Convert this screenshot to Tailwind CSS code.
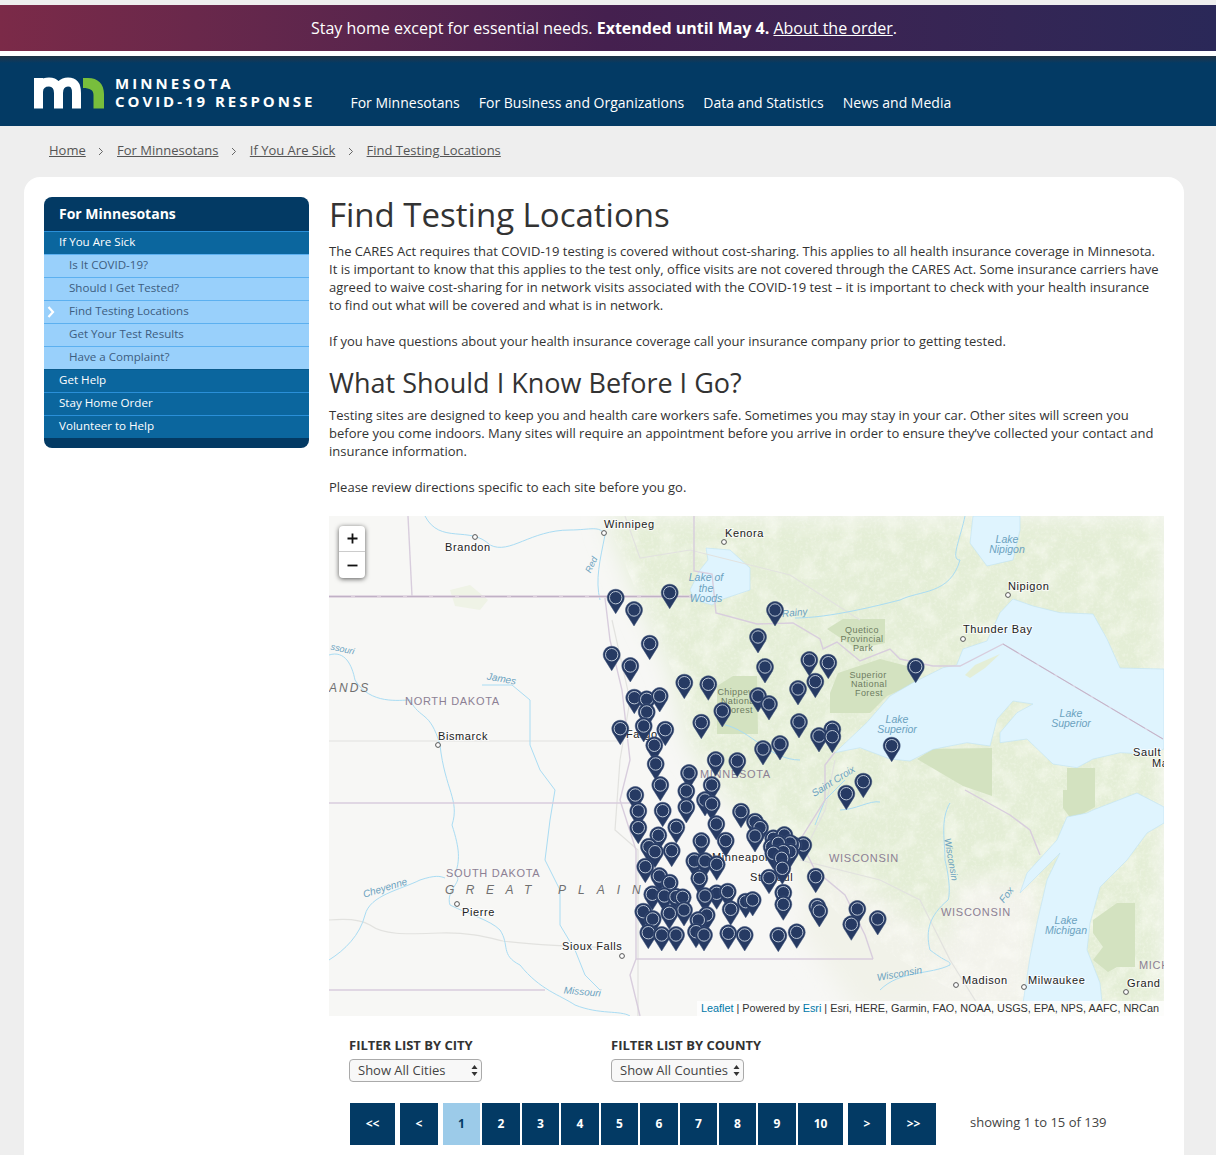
<!DOCTYPE html>
<html lang="en">

<head>
    <meta charset="UTF-8">
    <title>Find Testing Locations - Minnesota COVID-19 Response</title>
    <script src="https://cdn.jsdelivr.net/npm/@tailwindcss/browser@4"></script>
</head>

<body class="bg-[#eeeeee] h-[1155px] overflow-hidden font-['Open_Sans',sans-serif] text-[#333333]">
    <!-- alert banner -->
    <div class="pt-[5px] bg-[#eeeeee]">
        <div class="h-[46px] pr-[8px] flex items-center justify-center text-white text-[16px] bg-gradient-to-r from-[#7b2a48] via-[#45204f] to-[#2a2858]">
            <p>Stay home except for essential needs. <b class="font-bold">Extended until May 4.</b> <a class="underline" href="#">About the order</a>.</p>
        </div>
    </div>
    <div class="h-[5px] bg-white"></div>

    <!-- header -->
    <header class="h-[70px] bg-[#033a64] flex px-[34px] bg-gradient-to-b from-[#1d3344] via-[#033a64] via-[10%] to-[#033a64]">
        <svg class="w-[72px] h-[34px] mt-[20px] shrink-0" viewBox="34 76 72 34" fill="none">
            <path d="M38.5 108.5V78M38.5 92C38.5 84 44 82 49 82C55 82 58.5 86 58.5 93V108.5M58.5 93C58.5 85 63 82 68 82C74 82 76.5 86 76.5 93V108.5" stroke="#ffffff" stroke-width="9" />
            <path d="M83 78H88C98 78 104 84 104 94V108.5H93.5V95C93.5 90 90 88 83 88Z" fill="#78be3c" />
        </svg>
        <div class="ml-[9px] mt-[18px] text-white font-bold text-[15px] leading-[18px] whitespace-nowrap">
            <div class="tracking-[3.05px]">MINNESOTA</div>
            <div class="tracking-[2.97px]">COVID-19 RESPONSE</div>
        </div>
        <nav class="ml-[35px] mt-[37px] flex gap-[19px] text-white text-[14px] font-medium h-[20px] leading-[20px] whitespace-nowrap">
            <a href="#">For Minnesotans</a>
            <a href="#">For Business and Organizations</a>
            <a href="#">Data and Statistics</a>
            <a href="#">News and Media</a>
        </nav>
    </header>

    <!-- breadcrumb -->
    <div class="h-[51px] pl-[49px] flex items-center text-[13px] text-[#555555] pb-[1px]">
        <a class="underline" href="#">Home</a>
        <svg class="w-[6px] h-[9px] mx-[12.65px]" viewBox="0 0 6 9" fill="none"><path d="M1 1l3.5 3.5L1 8" stroke="#666666" /></svg>
        <a class="underline" href="#">For Minnesotans</a>
        <svg class="w-[6px] h-[9px] mx-[12.65px]" viewBox="0 0 6 9" fill="none"><path d="M1 1l3.5 3.5L1 8" stroke="#666666" /></svg>
        <a class="underline" href="#">If You Are Sick</a>
        <svg class="w-[6px] h-[9px] mx-[12.65px]" viewBox="0 0 6 9" fill="none"><path d="M1 1l3.5 3.5L1 8" stroke="#666666" /></svg>
        <a class="underline" href="#">Find Testing Locations</a>
    </div>

    <!-- main card -->
    <div class="mx-[24px] w-[1160px] bg-white rounded-t-[16px] pt-[20px] px-[20px] pb-[40px] flex gap-[20px]">
        <!-- side nav -->
        <aside class="w-[265px] shrink-0 self-start rounded-[8px] overflow-hidden bg-[#033a64] pb-[10px] text-[11.6px]">
            <h2 class="h-[34px] pl-[15px] pb-[2px] flex items-center text-white font-bold text-[14px]">For Minnesotans</h2>
            <a class="h-[23px] pl-[15px] pb-[2px] flex items-center bg-[#0b669e] text-white border-t border-[#2a8fd8]" href="#">If You Are Sick</a>
            <a class="h-[23px] pl-[25px] pb-[2px] flex items-center bg-[#99d0fb] text-[#3d5d80] border-t border-[#5cb0f0]" href="#">Is It COVID-19?</a>
            <a class="h-[23px] pl-[25px] pb-[2px] flex items-center bg-[#99d0fb] text-[#3d5d80] border-t border-[#5cb0f0]" href="#">Should I Get Tested?</a>
            <a class="relative h-[23px] pl-[25px] pb-[2px] flex items-center bg-[#99d0fb] text-[#3d5d80] border-t border-[#5cb0f0]" href="#">
                <svg class="absolute left-[3px] top-[5px] w-[8px] h-[12px]" viewBox="0 0 8 12" fill="none"><path d="M1.5 1l4.5 5-4.5 5" stroke="#ffffff" stroke-width="2.2" /></svg>
                Find Testing Locations
            </a>
            <a class="h-[23px] pl-[25px] pb-[2px] flex items-center bg-[#99d0fb] text-[#3d5d80] border-t border-[#5cb0f0]" href="#">Get Your Test Results</a>
            <a class="h-[23px] pl-[25px] pb-[2px] flex items-center bg-[#99d0fb] text-[#3d5d80] border-t border-[#5cb0f0]" href="#">Have a Complaint?</a>
            <a class="h-[23px] pl-[15px] pb-[2px] flex items-center bg-[#0b669e] text-white border-t border-[#0a5a8c]" href="#">Get Help</a>
            <a class="h-[23px] pl-[15px] pb-[2px] flex items-center bg-[#0b669e] text-white border-t border-[#2a8fd8]" href="#">Stay Home Order</a>
            <a class="h-[23px] pl-[15px] pb-[2px] flex items-center bg-[#0b669e] text-white border-t border-[#2a8fd8]" href="#">Volunteer to Help</a>
        </aside>

        <!-- content -->
        <main class="w-[835px] shrink-0">
            <h1 class="-mt-[1px] text-[33px] leading-[37px] text-[#333333]">Find Testing Locations</h1>
            <p class="mt-[9px] text-[13px] leading-[18px]">The CARES Act requires that COVID-19 testing is covered without cost-sharing. This applies to all health insurance coverage in Minnesota. It is important to know that this applies to the test only, office visits are not covered through the CARES Act. Some insurance carriers have agreed to waive cost-sharing for in network visits associated with the COVID-19 test – it is important to check with your health insurance to find out what will be covered and what is in network.</p>
            <p class="mt-[18px] text-[13px] leading-[18px]">If you have questions about your health insurance coverage call your insurance company prior to getting tested.</p>
            <h2 class="mt-[15px] text-[27px] leading-[35px]">What Should I Know Before I Go?</h2>
            <p class="mt-[6px] text-[13px] leading-[18px]">Testing sites are designed to keep you and health care workers safe. Sometimes you may stay in your car. Other sites will screen you before you come indoors. Many sites will require an appointment before you arrive in order to ensure they’ve collected your contact and insurance information.</p>
            <p class="mt-[18px] text-[13px] leading-[18px]">Please review directions specific to each site before you go.</p>

            <!-- map -->
            <div class="relative mt-[20px] w-[835px] h-[500px] overflow-hidden">
                <svg id="map" class="block w-[835px] h-[500px]" viewBox="329 516 835 500" fill="none">
                    <defs>
                        <filter id="speckle" x="0" y="0" width="100%" height="100%">
                            <feTurbulence type="fractalNoise" baseFrequency="0.35" numOctaves="2" seed="4" />
                            <feColorMatrix values="0 0 0 0 1  0 0 0 0 1  0 0 0 0 0.95  1.6 0 0 0 -0.72" />
                        </filter>
                        <filter id="patches" x="0" y="0" width="100%" height="100%">
                            <feTurbulence type="fractalNoise" baseFrequency="0.05" numOctaves="3" seed="9" />
                            <feColorMatrix values="0 0 0 0 1  0 0 0 0 1  0 0 0 0 0.96  2.2 0 0 0 -0.95" />
                        </filter>
                        <filter id="soft"><feGaussianBlur stdDeviation="12" /></filter>
                        <clipPath id="greenclip"><path d="M605 516L640 600L672 670L690 745L725 795L785 845L815 890L860 935L925 975L1000 1016H1164V516Z" /></clipPath>
                        <g id="pin">
                            <path d="M0 16L-7.4 4.2A8.5 8.5 0 1 1 7.4 4.2Z" fill="#263a63" stroke="#3d5078" stroke-width=".5" />
                            <circle r="6.2" fill="#263a63" stroke="#bcc7d6" stroke-width="1" />
                        </g>
                    </defs>

                    <!-- land -->
                    <rect x="329" y="516" width="835" height="500" fill="#f7f7f5" />
                    <path d="M605 516L640 600L672 670L690 745L725 795L785 845L815 890L860 935L925 975L1000 1016H1164V516Z" fill="#e4eed6" filter="url(#soft)" />
                    <path d="M820 850L930 930L1030 1016H860L800 930Z" fill="#f1f2e9" filter="url(#soft)" />
                    <path d="M960 880L1040 880L1040 1016L920 1016Z" fill="#f3f3ec" filter="url(#soft)" />
                    <rect x="329" y="516" width="835" height="500" filter="url(#patches)" clip-path="url(#greenclip)" opacity=".5" />
                    <rect x="329" y="516" width="835" height="500" filter="url(#speckle)" clip-path="url(#greenclip)" opacity=".45" />

                    <!-- parks -->
                    <g fill="#d3e2c0">
                        <path d="M827 629L843 619H885V643L857 649Z" />
                        <path d="M838 673L880 659L907 666L917 683L887 696L870 713H830V693Z" />
                        <path d="M717 686L733 676H757L758 734H717Z" />
                        <path d="M917 759L933 749L992 748V796L963 786Z" />
                        <path d="M1067 768H1095V806H1067Z" />
                        <path d="M1093 920L1117 903H1135V967H1117L1108 972L1093 960L1103 947L1093 933Z" />
                        <path d="M1063 790H1095V807L1072 820L1063 808Z" />
                        <path d="M450 590L470 585L488 600L480 610L455 606Z" fill="#eff3e6" />
                    </g>

                    <!-- water -->
                    <g fill="#dff4fe" stroke="#bfe3f3" stroke-width=".6">
                        <path d="M835 752.7L866.7 722.7L890 696L913 682.7L943 667.7L956.7 665L963 649L987 641L1000 612.7L1013 599L1033 606L1060 612.7L1093 614L1107 639L1120 668L1164 669V749L1147 754L1120 752.7L1093 759L1077 767.7L1053 764L1027 739L1000 742.7V732.7L1017 712.7L1033 704L1013 701L997 719L990 746L967 742.7L933 749.3L910 761L890 759L860 747.7Z" />
                        <path d="M973 516H1020V530L1013 560L987 566L970 543Z" />
                        <path d="M1093 810L1137 793L1164 807V823L1147 833L1127 860L1100 887L1090 923L1087 950L1100 983L1102 1003H1023L1030 957L1037 923L1047 880L1060 853L1040 873L1020 893L1027 873L1057 840L1067 817L1087 813Z" />
                        <path d="M706 548L730 550L750 568L750 590L720 600L712 605L695 600L690 590L700 570L708 560Z" />
                    </g>
                    <!-- isle royale -->
                    <path d="M965 675L975 665L1000 654L985 668L970 678Z" fill="#e4eed6" />

                    <!-- roads -->
                    <g stroke="#e2e2df" stroke-width="1.2">
                        <path d="M329 741H620" />
                        <path d="M329 920C350 918 362 920 370 925C385 936 410 934 440 933C470 932 490 938 503 941C540 946 580 947 620 948" />
                        <path d="M625 516L640 558L690 550L790 575L860 620" />
                        <path d="M612 620L630 700L620 760L615 830L638 850V1016" />
                        <path d="M835 760L825 810L800 860L880 880L920 900L950 960L985 1016" />
                    </g>

                    <!-- rivers -->
                    <g stroke="#a9dcf3" stroke-width="1">
                        <path d="M425 516C440 545 470 525 490 545C510 555 530 530 570 530C590 530 600 525 605 535C600 560 595 580 600 600" />
                        <path d="M329 655C345 650 352 665 355 680C370 705 400 700 410 700C420 720 430 710 440 745C445 790 460 800 452 825C460 850 460 860 455 875C465 880 445 890 450 905C470 915 490 920 500 930C510 945 500 955 520 965C540 990 560 995 575 1005C600 1015 620 1010 630 1016" />
                        <path d="M482 685L512 685L530 700L530 745L540 770L555 790L550 820L545 860L560 890L560 925L575 950L585 975L600 990" />
                        <path d="M329 960C345 950 360 935 365 915C370 895 400 890 420 880C435 875 440 876 445 878" />
                        <path d="M880 802C870 800 855 810 840 810M845 780L825 800L815 825" />
                        <path d="M950 803C940 820 945 840 945 860C950 880 950 895 948 900C930 915 925 930 930 950C950 965 950 960 950 965C930 975 900 970 880 990" />
                        <path d="M795 618C830 618 880 605 900 600C920 590 950 595 960 560C950 560 960 540 965 516" />
                        <path d="M725 725C750 730 770 760 800 760" />
                    </g>

                    <!-- borders -->
                    <g stroke="#d8cddd" stroke-width="1.4">
                        <path d="M329 596.5H693" stroke-width="2.4" stroke="#dccfdd" />
                        <path d="M329 596.5H693" stroke="#b9a9c0" stroke-width=".8" stroke-dasharray="22 4" />
                        <path d="M694 516V571L712 574L716 613L757 624L793 623L820 639L823 649L837 642L860 661L890 649L900 659L933 666L960 666L1003 644L1163 739" />
                        <path d="M1003 644L1163 739" stroke="#b9a9c0" stroke-width=".7" stroke-dasharray="18 3" />
                        <path d="M408 516L412 596" />
                        <path d="M329 803H630" />
                        <path d="M329 990H545" />
                        <path d="M636 959H873" />
                        <path d="M605 598L610 640L622 690L630 760L620 800L636 850V959" />
                        <path d="M636 959L630 975L640 1016" />
                        <path d="M835 752L825 765V800L800 840L815 870L845 895L865 935L873 959" />
                        <path d="M965 790L1010 815L1030 830L1040 855" />
                    </g>

                    <!-- city dots -->
                    <g fill="#ffffff" stroke="#555555" stroke-width="1">
                        <circle cx="604" cy="533" r="2.4" /><circle cx="475" cy="537" r="2.4" /><circle cx="724" cy="542" r="2.4" />
                        <circle cx="1008" cy="595" r="2.4" /><circle cx="963" cy="639" r="2.4" /><circle cx="438" cy="745" r="2.4" />
                        <circle cx="457" cy="904" r="2.4" /><circle cx="622" cy="956" r="2.4" /><circle cx="956" cy="985" r="2.4" />
                        <circle cx="1024" cy="987" r="2.4" /><circle cx="1126" cy="992" r="2.4" />
                    </g>

                    <!-- labels -->
                    <g font-family="'Liberation Sans',Arial,sans-serif" font-size="11" letter-spacing=".6" fill="#222222" stroke="#ffffff" stroke-width="2" stroke-opacity=".7" paint-order="stroke">
                        <text x="604" y="528">Winnipeg</text>
                        <text x="445" y="551">Brandon</text>
                        <text x="725" y="537">Kenora</text>
                        <text x="1008" y="590">Nipigon</text>
                        <text x="963" y="633">Thunder Bay</text>
                        <text x="438" y="740">Bismarck</text>
                        <text x="462" y="916">Pierre</text>
                        <text x="562" y="950">Sioux Falls</text>
                        <text x="962" y="984">Madison</text>
                        <text x="1028" y="984">Milwaukee</text>
                        <text x="1127" y="987">Grand</text>
                        <text x="1133" y="756">Sault</text>
                        <text x="1152" y="767">Ma</text>
                        <text x="626" y="738">Fargo</text>
                        <text x="712" y="861">Minneapolis</text>
                        <text x="750" y="881">St. Paul</text>
                    </g>
                    <g font-family="'Liberation Sans',Arial,sans-serif" font-size="11" letter-spacing=".7" fill="#8c8094">
                        <text x="405" y="705">NORTH DAKOTA</text>
                        <text x="446" y="877">SOUTH DAKOTA</text>
                        <text x="700" y="778">MINNESOTA</text>
                        <text x="829" y="862">WISCONSIN</text>
                        <text x="941" y="916">WISCONSIN</text>
                        <text x="1139" y="969">MICH</text>
                    </g>
                    <g font-family="'Liberation Sans',Arial,sans-serif" font-size="12" font-style="italic" fill="#6f6f6f">
                        <text x="329" y="692" letter-spacing="2">ANDS</text>
                        <text x="445" y="894" letter-spacing="11.5">GREAT</text>
                        <text x="558" y="894" letter-spacing="12">PLAIN</text>
                    </g>
                    <g font-family="'Liberation Sans',Arial,sans-serif" font-size="10.5" font-style="italic" fill="#6ba2bf" text-anchor="middle">
                        <text x="706" y="581">Lake of</text><text x="706" y="592">the</text><text x="706" y="602">Woods</text>
                        <text x="1007" y="543">Lake</text><text x="1007" y="553">Nipigon</text>
                        <text x="897" y="723">Lake</text><text x="897" y="733">Superior</text>
                        <text x="1071" y="717">Lake</text><text x="1071" y="727">Superior</text>
                        <text x="1066" y="924">Lake</text><text x="1066" y="934">Michigan</text>
                        <text transform="translate(795 616) rotate(-6)" font-size="10">Rainy</text>
                        <text transform="translate(501 682) rotate(10)" font-size="10">James</text>
                        <text transform="translate(342 652) rotate(12)" font-size="9">ssouri</text>
                        <text transform="translate(594 566) rotate(-65)" font-size="9">Red</text>
                        <text transform="translate(835 784) rotate(-32)" font-size="10">Saint Croix</text>
                        <text transform="translate(386 891) rotate(-17)" font-size="10">Cheyenne</text>
                        <text transform="translate(582 995) rotate(5)" font-size="10">Missouri</text>
                        <text transform="translate(948 860) rotate(80)" font-size="9.5">Wisconsin</text>
                        <text transform="translate(1009 897) rotate(-52)" font-size="10">Fox</text>
                        <text transform="translate(900 977) rotate(-10)" font-size="10">Wisconsin</text>
                    </g>
                    <g font-family="'Liberation Sans',Arial,sans-serif" font-size="9" fill="#6d7c60" text-anchor="middle" letter-spacing=".4">
                        <text x="862" y="633">Quetico</text><text x="862" y="642">Provincial</text><text x="863" y="651">Park</text>
                        <text x="868" y="678">Superior</text><text x="869" y="687">National</text><text x="869" y="696">Forest</text>
                        <text x="739" y="695">Chippewa</text><text x="739" y="704">National</text><text x="739" y="713">Forest</text>
                    </g>

                    <g id="pins"></g>
                </svg>

                <!-- zoom control -->
                <div class="absolute left-[10px] top-[10px] w-[26px] rounded-[4px] bg-white shadow-[0_1px_5px_rgba(0,0,0,0.65)] text-black">
                    <div class="h-[26px] flex items-center justify-center border-b border-[#cccccc]">
                        <svg class="w-[11px] h-[11px]" viewBox="0 0 11 11"><path d="M5.5 0.5v10M0.5 5.5h10" stroke="#111111" stroke-width="1.8" /></svg>
                    </div>
                    <div class="h-[26px] flex items-center justify-center">
                        <svg class="w-[11px] h-[11px]" viewBox="0 0 11 11"><path d="M0.5 5.5h10" stroke="#111111" stroke-width="1.8" /></svg>
                    </div>
                </div>

                <!-- attribution -->
                <div class="absolute right-0 bottom-0 h-[15px] pl-[4px] pr-[5px] bg-white/80 flex items-center font-['Liberation_Sans',Arial,sans-serif] text-[10.85px] text-[#333333] whitespace-nowrap">
                    <a class="text-[#0078a8]" href="#">Leaflet</a>&nbsp;|&nbsp;Powered by&nbsp;<a class="text-[#0078a8]" href="#">Esri</a>&nbsp;|&nbsp;Esri, HERE, Garmin, FAO, NOAA, USGS, EPA, NPS, AAFC, NRCan
                </div>
            </div>

            <!-- filters -->
            <div class="mt-[21px] ml-[20px] flex gap-[129px]">
                <div class="w-[133px]">
                    <label class="block text-[13px] leading-[17px] font-bold uppercase whitespace-nowrap">Filter list by city</label>
                    <div class="relative mt-[5px] h-[23px] pl-[8px] flex items-center rounded-[4px] border border-[#aaaaaa] bg-[#f8f8f8] text-[13px] text-[#444444]">
                        Show All Cities
                        <svg class="absolute right-[3px] top-[5px] w-[7px] h-[11px]" viewBox="0 0 7 11"><path d="M3.5 0L6.5 4H0.5ZM3.5 11L0.5 7H6.5Z" fill="#333333" /></svg>
                    </div>
                </div>
                <div class="w-[133px]">
                    <label class="block text-[13px] leading-[17px] font-bold uppercase whitespace-nowrap">Filter list by county</label>
                    <div class="relative mt-[5px] h-[23px] pl-[8px] flex items-center rounded-[4px] border border-[#aaaaaa] bg-[#f8f8f8] text-[13px] text-[#444444] whitespace-nowrap">
                        Show All Counties
                        <svg class="absolute right-[3px] top-[5px] w-[7px] h-[11px]" viewBox="0 0 7 11"><path d="M3.5 0L6.5 4H0.5ZM3.5 11L0.5 7H6.5Z" fill="#333333" /></svg>
                    </div>
                </div>
            </div>

            <!-- pagination -->
            <div class="mt-[21px] ml-[21px] flex items-center text-[12px] font-bold text-white">
                <a class="w-[45px] h-[42px] flex items-center justify-center bg-[#033a64]" href="#">&lt;&lt;</a>
                <a class="ml-[5px] w-[38px] h-[42px] flex items-center justify-center bg-[#033a64]" href="#">&lt;</a>
                <a class="ml-[5px] w-[37px] h-[42px] flex items-center justify-center bg-[#9ccbe9] text-[#033a64]" href="#">1</a>
                <a class="ml-[2px] w-[38px] h-[42px] flex items-center justify-center bg-[#033a64]" href="#">2</a>
                <a class="ml-[2px] w-[37px] h-[42px] flex items-center justify-center bg-[#033a64]" href="#">3</a>
                <a class="ml-[2px] w-[38px] h-[42px] flex items-center justify-center bg-[#033a64]" href="#">4</a>
                <a class="ml-[2px] w-[37px] h-[42px] flex items-center justify-center bg-[#033a64]" href="#">5</a>
                <a class="ml-[2px] w-[38px] h-[42px] flex items-center justify-center bg-[#033a64]" href="#">6</a>
                <a class="ml-[2px] w-[37px] h-[42px] flex items-center justify-center bg-[#033a64]" href="#">7</a>
                <a class="ml-[2px] w-[37px] h-[42px] flex items-center justify-center bg-[#033a64]" href="#">8</a>
                <a class="ml-[2px] w-[38px] h-[42px] flex items-center justify-center bg-[#033a64]" href="#">9</a>
                <a class="ml-[2px] w-[45px] h-[42px] flex items-center justify-center bg-[#033a64]" href="#">10</a>
                <a class="ml-[5px] w-[38px] h-[42px] flex items-center justify-center bg-[#033a64]" href="#">&gt;</a>
                <a class="ml-[5px] w-[45px] h-[42px] flex items-center justify-center bg-[#033a64]" href="#">&gt;&gt;</a>
                <span class="ml-[34px] -mt-[2px] text-[13px] font-normal text-[#444444] whitespace-nowrap">showing 1 to 15 of 139</span>
            </div>
        </main>
    </div>

    <script>
// pin head centres, in page coordinates
const pins = [[615.7,597.7],[634,610],[669.7,592.7],[775,610],[758,637],[649.7,643.7],[611.7,654.7],[630.3,666],[765,667],[809.3,660],[828.3,662.7],[915.7,666.7],
[815.3,681.7],[684.3,682.7],[708.3,684.3],[798,689],[634.3,697.7],[646.7,699.3],[659.7,696],[758,696],[769,704],[646.7,712],[722.3,711],[701.3,722.7],[799,722],
[620.3,728.7],[643.7,726],[665.3,729.7],[832.3,729.3],[819,736],[832.3,736.7],[780,744],[763,749],[654.3,745.3],[891.7,745.7],[715.7,760],[737.3,761],[655.7,764],
[689,773],[863.3,781.7],[846.3,793.7],[660.3,785],[635.3,795],[711.7,785],[686.3,791],[638.3,811],[662.7,810.7],[686.3,807],[705,800],[711.7,804],[741,811.7],
[755,821.7],[760,827.7],[716.3,824],[638.3,827.7],[676.3,827.3],[658.3,835.3],[725.7,840.7],[701.3,841],[755,836],[649,846.7],[655,851.7],[671.7,850.7],
[773.3,838.3],[784.3,835],[803.3,845],[793.3,845],[790,843],[771.7,846.7],[778.3,843.3],[790,851.7],[783.3,851.7],[773.3,853.3],[781.7,858.3],[782.3,868.3],
[694.3,861],[705,861],[716.7,864.3],[645.3,866.7],[699.3,878.3],[659.3,876],[669.7,882.7],[769,877.7],[815.7,876.7],[652.3,894.3],[664.3,896],[676,896.7],[682.7,897.3],
[716.7,893.3],[727.7,891.7],[705,896],[783.3,892.7],[745.7,901.7],[752.7,900],[783.3,904.3],[817.3,906.7],[819.3,911],[857.3,909],[730.7,909.3],[643.3,911.7],[684,910],
[669.3,913.3],[706.7,915],[877.7,919],[652.7,919],[698.3,920],[851.3,924.3],[648.3,932.7],[696,931.7],[728.3,933.3],[796.7,932.3],[661.7,935],[676,935],[704,935],[744.7,935],[778.3,935.7]]

document.getElementById('pins').innerHTML = pins
    .map(([x, y]) => `<use href="#pin" x="${x}" y="${y}"></use>`)
    .join('')
    </script>
</body>

</html>
